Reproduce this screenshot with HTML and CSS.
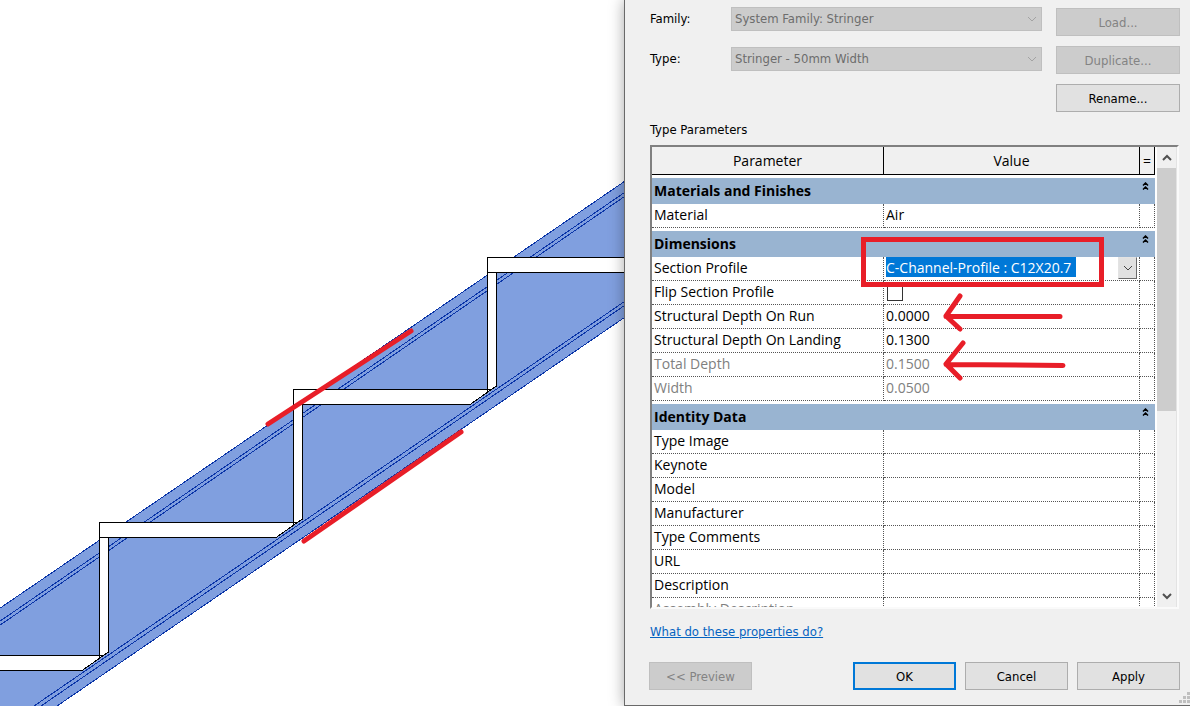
FILE: index.html
```
<!DOCTYPE html>
<html lang="en">
<head>
  <meta charset="UTF-8" />
  <meta name="viewport" content="width=device-width, initial-scale=1.0"/>
  <title>Type Properties</title>
  <link rel="stylesheet" href="styles.css">
</head>
<body>
  <main class="drawing">
    <svg class="section" width="640" height="706" viewBox="0 0 640 706">
      <!-- stringer -->
      <polygon class="stringer" points="-10,615 650,164 650,300 57,706 -10,752" />
      <g class="edges">
        <path d="M-10 615L650 164M-10 628L650 175M-10 632L650 179" />
        <path d="M34 706L650 284M41 706L650 288M57 706L650 300" />
      </g>
      <!-- treads and risers -->
      <g class="steps">
        <path d="M-5 655.5H99.5V522.5H293.5V389.5H487.5V257.5H650V272.5H496.5V386L470 404.5H302.5V519L276 537.5H108.5V652L82 670.5H-5Z" />
        <path d="M99.5 537.5H108.5M293.5 404.5H302.5M487.5 272.5H496.5" />
        <path d="M99.5 655.5H102.5M99.5 655.5V658M293.5 522.5H296.5M293.5 522.5V525M487.5 389.5H490.5M487.5 389.5V392" />
      </g>
      <g class="markup">
        <path d="M268 424L411 331M304 541L461 432" />
      </g>
    </svg>
  </main>

  <section class="dialog">
    <div class="top">
      <form class="fields">
        <label for="family">Family:</label>
        <div class="select-wrap">
          <select id="family" disabled><option>System Family: Stringer</option></select>
          <svg class="arrow" width="10" height="6" viewBox="0 0 10 6"><path d="M1 1L5 5L9 1" /></svg>
        </div>
        <label for="type">Type:</label>
        <div class="select-wrap">
          <select id="type" disabled><option>Stringer - 50mm Width</option></select>
          <svg class="arrow" width="10" height="6" viewBox="0 0 10 6"><path d="M1 1L5 5L9 1" /></svg>
        </div>
      </form>
      <div class="side-buttons">
        <button class="btn" disabled>Load...</button>
        <button class="btn" disabled>Duplicate...</button>
        <button class="btn">Rename...</button>
      </div>
    </div>

    <h2>Type Parameters</h2>

    <div class="grid">
      <div class="rows">
        <table>
          <colgroup><col class="c-name"><col class="c-value"><col class="c-eq"></colgroup>
          <thead>
            <tr><th>Parameter</th><th>Value</th><th class="eq">=</th></tr>
          </thead>
          <tbody>
            <tr class="group"><td colspan="3"><div class="group-head">Materials and Finishes <button class="toggle" aria-label="Collapse"><svg width="7" height="8" viewBox="0 0 7 8"><path d="M1 3.5L3.5 1L6 3.5M1 7.5L3.5 5L6 7.5" /></svg></button></div></td></tr>
            <tr><td>Material</td><td>Air</td><td></td></tr>
            <tr class="group"><td colspan="3"><div class="group-head">Dimensions <button class="toggle" aria-label="Collapse"><svg width="7" height="8" viewBox="0 0 7 8"><path d="M1 3.5L3.5 1L6 3.5M1 7.5L3.5 5L6 7.5" /></svg></button></div></td></tr>
            <tr><td><label for="profile">Section Profile</label></td><td class="edit">
              <div class="combo">
                <input type="text" id="profile" value="C-Channel-Profile : C12X20.7" />
                <button class="drop" aria-label="Open list"><svg width="10" height="6" viewBox="0 0 10 6"><path d="M1 1L5 5L9 1" /></svg></button>
              </div>
            </td><td></td></tr>
            <tr><td><label for="flip">Flip Section Profile</label></td><td class="edit"><input type="checkbox" id="flip" /></td><td></td></tr>
            <tr><td>Structural Depth On Run</td><td>0.0000</td><td></td></tr>
            <tr><td>Structural Depth On Landing</td><td>0.1300</td><td></td></tr>
            <tr class="readonly"><td>Total Depth</td><td>0.1500</td><td></td></tr>
            <tr class="readonly"><td>Width</td><td>0.0500</td><td></td></tr>
            <tr class="group"><td colspan="3"><div class="group-head">Identity Data <button class="toggle" aria-label="Collapse"><svg width="7" height="8" viewBox="0 0 7 8"><path d="M1 3.5L3.5 1L6 3.5M1 7.5L3.5 5L6 7.5" /></svg></button></div></td></tr>
            <tr><td>Type Image</td><td></td><td></td></tr>
            <tr><td>Keynote</td><td></td><td></td></tr>
            <tr><td>Model</td><td></td><td></td></tr>
            <tr><td>Manufacturer</td><td></td><td></td></tr>
            <tr><td>Type Comments</td><td></td><td></td></tr>
            <tr><td>URL</td><td></td><td></td></tr>
            <tr><td>Description</td><td></td><td></td></tr>
            <tr class="readonly"><td>Assembly Description</td><td></td><td></td></tr>
          </tbody>
        </table>
      </div>
      <div class="scrollbar">
        <button class="scroll-btn" aria-label="Scroll up"><svg width="10" height="7" viewBox="0 0 10 7"><path d="M1 6L5 2L9 6" /></svg></button>
        <div class="thumb"></div>
        <button class="scroll-btn" aria-label="Scroll down"><svg width="10" height="7" viewBox="0 0 10 7"><path d="M1 1L5 5L9 1" /></svg></button>
      </div>
      <!-- red notes over the values -->
      <svg class="markup notes" width="525" height="460" viewBox="652 147 525 460">
        <path class="box" d="M863.5 239.5H1101.5V284.5H863.5Z" />
        <path d="M1060 316.5H946M960 296L946 316L960 329" />
        <path d="M1063 365.5L946 364.5M963 343L946 364L960 378" />
      </svg>
    </div>

    <a class="help" href="#">What do these properties do?</a>

    <div class="footer">
      <button class="btn preview" disabled>&lt;&lt; Preview</button>
      <button class="btn default">OK</button>
      <button class="btn">Cancel</button>
      <button class="btn">Apply</button>
    </div>
    <svg class="grip" width="11" height="11" viewBox="0 0 11 11">
      <path d="M8 0h3v3h-3zM4 4h3v3h-3zM8 4h3v3h-3zM0 8h3v3h-3zM4 8h3v3h-3zM8 8h3v3h-3z" />
    </svg>
  </section>
</body>
</html>
```
FILE: styles.css
```
* {
  box-sizing: border-box;
}

body {
  margin: 0;
  display: flex;
  height: 100vh;
  background: #fff;
  color: #000;
  font-family: "DejaVu Sans Condensed", "DejaVu Sans", sans-serif;
  font-size: 13px;
  line-height: 16px;
}

/* drawing */
.drawing {
  flex: 1;
  min-width: 0;
  overflow: hidden;
}

.section {
  display: block;
}

.stringer {
  fill: #809fdf;
}

.edges path {
  fill: none;
  stroke: #0a35a8;
  shape-rendering: crispEdges;
}

.steps path {
  fill: #fff;
  stroke: #000;
  shape-rendering: crispEdges;
}

.markup path {
  fill: none;
  stroke: #e81e28;
  stroke-width: 5px;
  stroke-linecap: round;
  stroke-linejoin: round;
}

.markup .box {
  stroke-linejoin: miter;
}

/* dialog */
.dialog {
  position: relative;
  flex: 0 0 566px;
  display: flex;
  flex-direction: column;
  padding: 7px 10px 15px 25px;
  background: #f0f0f0;
  border-left: 1px solid #696969;
  border-bottom: 1px solid #696969;
  box-shadow: 0 0 14px rgba(0, 0, 0, 0.35);
}

.top {
  display: flex;
  gap: 14px;
}

.fields {
  flex: 1;
  display: grid;
  grid-template-columns: 81px 1fr;
  grid-auto-rows: 24px;
  row-gap: 16px;
  align-items: center;
}

.select-wrap {
  display: grid;
  align-items: center;
}

.select-wrap > * {
  grid-area: 1 / 1;
}

select {
  appearance: none;
  width: 100%;
  height: 24px;
  padding: 0 3px;
  border: 1px solid #bfbfbf;
  border-radius: 0;
  background: #ccc;
  color: #6d6d6d;
  font: inherit;
  opacity: 1;
}

.arrow {
  justify-self: end;
  margin-right: 5px;
}

.arrow path {
  fill: none;
  stroke: #a3a3a3;
}

.side-buttons {
  width: 124px;
  display: flex;
  flex-direction: column;
  gap: 10px;
  padding-top: 1px;
}

.btn {
  height: 28px;
  padding: 1px 0 0;
  border: 1px solid #adadad;
  background: #e1e1e1;
  color: #000;
  font: inherit;
}

.btn:disabled {
  border-color: #bfbfbf;
  background: #ccc;
  color: #838383;
}

.btn.default {
  border: 2px solid #0078d7;
}

h2 {
  margin: 10px 0 7px;
  font-size: 13px;
  font-weight: normal;
}

/* parameter grid */
.grid {
  position: relative;
  flex: 1;
  min-height: 0;
  display: flex;
  margin-right: 1px;
  border: 2px solid;
  border-color: #808080 #fafafa #fafafa #808080;
  background: #fff;
  overflow: hidden;
  font-family: "Open Sans", "Noto Sans", sans-serif;
  font-size: 14px;
}

.rows {
  flex: 1;
  overflow: hidden;
}

table {
  width: 100%;
  table-layout: fixed;
  border-collapse: separate;
  border-spacing: 0;
}

.c-name {
  width: 232px;
}

.c-eq {
  width: 15px;
}

th {
  height: 28px;
  padding: 0;
  border-right: 1px solid #000;
  border-bottom: 1px solid #000;
  background: #f0f0f0;
  font-weight: normal;
}

td {
  height: 24px;
  padding: 0 2px 2px;
  border-right: 1px dotted #555;
  border-bottom: 1px dotted #555;
  white-space: nowrap;
}

.edit {
  padding-bottom: 0;
}

.group td {
  height: 29px;
  padding: 0;
  border: 0;
  border-top: 3px solid #fff;
  background: #99b4d1;
  font-weight: bold;
}

.group-head {
  display: flex;
  justify-content: space-between;
  height: 26px;
  padding-left: 2px;
  line-height: 26px;
}

.toggle {
  align-self: flex-start;
  display: flex;
  margin: 4px 6px 0 0;
  padding: 0;
  border: 0;
  background: none;
}

.toggle path {
  fill: none;
  stroke: #000;
  stroke-width: 1.5px;
}

.readonly td {
  color: #808080;
}

.combo {
  display: flex;
  align-items: flex-start;
  justify-content: space-between;
  height: 23px;
}

.combo input {
  width: 190px;
  height: 20px;
  padding: 0;
  border: 0;
  background: #0078d7;
  color: #fff;
  font: inherit;
}

.drop {
  display: flex;
  align-items: center;
  justify-content: center;
  width: 19px;
  height: 22px;
  padding: 0;
  border: 1px solid;
  border-color: #e3e3e3 #696969 #696969 #e3e3e3;
  background: #e1e1e1;
}

.drop path {
  fill: none;
  stroke: #444;
}

input[type="checkbox"] {
  appearance: none;
  display: block;
  width: 16px;
  height: 16px;
  margin: 0 1px;
  border: 1px solid #333;
  background: #fff;
}

.scrollbar {
  width: 22px;
  display: flex;
  flex-direction: column;
  border-left: 2px solid #fff;
  border-right: 1px solid #e3e3e3;
  background: #f0f0f0;
}

.scroll-btn {
  display: flex;
  align-items: center;
  justify-content: center;
  height: 21px;
  padding: 0;
  border: 0;
  background: #f0f0f0;
}

.scroll-btn path {
  fill: none;
  stroke: #505050;
  stroke-width: 2px;
}

.thumb {
  height: 243px;
  margin-bottom: auto;
  background: #cdcdcd;
}

.notes {
  position: absolute;
  top: 0;
  left: 0;
  pointer-events: none;
}

.help {
  align-self: flex-start;
  margin: 15px 0 22px;
  color: #0563c1;
}

.footer {
  display: flex;
  gap: 9px;
  margin-left: -1px;
}

.footer .btn {
  width: 103px;
}

.footer .preview {
  margin-right: auto;
}

.grip {
  position: absolute;
  right: 0;
  bottom: 2px;
  fill: #bfbfbf;
}
```
